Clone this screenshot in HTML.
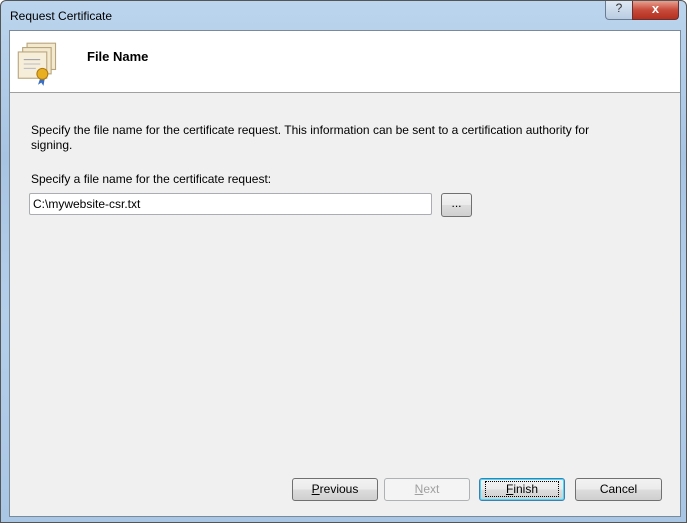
<!DOCTYPE html><html><head><style>
body{margin:0;width:687px;height:523px;overflow:hidden;font-family:"Liberation Sans",sans-serif;font-size:12px;color:#000}
.frame{position:absolute;left:0;top:0;width:685px;height:521px;border:1px solid #555;border-radius:6px 6px 0 0;background:linear-gradient(180deg,#bcd5ee 0%,#a7c4e3 30%,#b4cfea 60%,#a9c6e5 100%)}
.title{position:absolute;left:9px;top:8px;font-size:12px}
.client{position:absolute;left:8px;top:29px;width:670px;height:485px;border:1px solid #7a8a9a;background:#f0f0f0}
.head{position:absolute;left:0;top:0;width:670px;height:61px;background:#fff;border-bottom:1px solid #a0a0a0}
.btn{position:absolute;top:447px;height:21px;border:1px solid #707070;border-radius:3px;background:linear-gradient(#f2f2f2,#ebebeb 50%,#dddddd 51%,#cfcfcf);text-align:center;line-height:21px;box-sizing:content-box}
.dis{border-color:#adb2b5;background:#f4f4f4;color:#a0a0a0}
.tb{position:absolute;border:1px solid #abadb3;border-radius:2px}
</style></head><body>
<div class="frame">
<div class="title">Request Certificate</div>
<div style="position:absolute;left:604px;top:0;width:26px;height:18px;border:1px solid #6a7c90;border-top:none;border-radius:0 0 0 4px;background:linear-gradient(#dfe9f4,#b8cce2);text-align:center;font-size:12px;color:#333">?</div>
<div style="position:absolute;left:631px;top:0;width:45px;height:18px;border:1px solid #6a3030;border-top:none;border-radius:0 0 4px 0;background:linear-gradient(#e8a090,#c74a3a 50%,#b33020);text-align:center;color:#fff;font-weight:bold;font-size:13px">x</div>
<div class="client">
<div class="head">
<svg style="position:absolute;left:6px;top:10px" width="44" height="46" viewBox="0 0 40 42">
<rect x="10" y="2" width="26" height="24" fill="#f3e9cf" stroke="#b9a57c"/>
<rect x="6" y="6" width="26" height="24" fill="#f3e9cf" stroke="#b9a57c"/>
<rect x="2" y="10" width="26" height="24" fill="#f6eed8" stroke="#b9a57c"/>
<line x1="7" y1="17" x2="22" y2="17" stroke="#99a"/><line x1="7" y1="21" x2="22" y2="21" stroke="#bbc"/><line x1="7" y1="25" x2="18" y2="25" stroke="#bbc"/>
<path d="M22 34 l-2 6 3-2 2 3 1-6z" fill="#3a6ec0"/>
<circle cx="24" cy="30" r="5" fill="#e8b020" stroke="#b07a10"/>
</svg>
<div style="position:absolute;left:77px;top:18px;font-weight:bold;font-size:13px">File Name</div>
</div>
<div style="position:absolute;left:21px;top:92px;width:600px;line-height:15px">Specify the file name for the certificate request. This information can be sent to a certification authority for signing.</div>
<div style="position:absolute;left:21px;top:141px">Specify a file name for the certificate request:</div>
<div class="tb" style="left:19px;top:162px;width:401px;height:20px;background:#fff"><span style="position:absolute;left:3px;top:3px">C:\mywebsite-csr.txt</span></div>
<div class="btn" style="left:431px;top:162px;width:29px;height:22px;line-height:18px">...</div>
<div class="btn" style="left:282px;width:84px"><u>P</u>revious</div>
<div class="btn dis" style="left:374px;width:84px"><u>N</u>ext</div>
<div class="btn" style="left:469px;width:84px;border-color:#3c7fb1;box-shadow:inset 0 0 0 1px #48d8fb"><span style="outline:1px dotted #000;padding:0 20px"><u>F</u>inish</span></div>
<div class="btn" style="left:565px;width:85px">Cancel</div>
</div></div>
</body></html>
